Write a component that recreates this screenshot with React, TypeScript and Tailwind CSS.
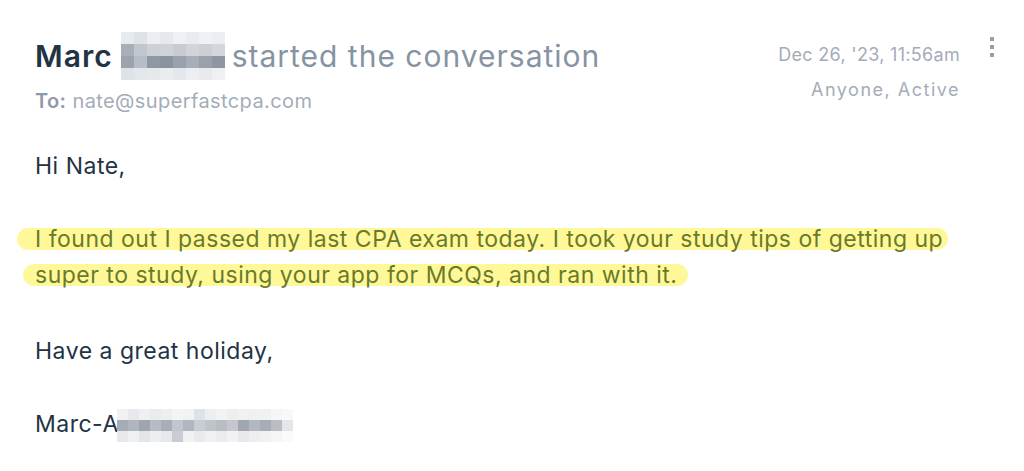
const nameBlur = [
  ['#e8eaee', '#dfe2e7', '#eceef1', '#e6e8ec', '#eef0f3', '#e9ebee', '#f0f1f4', '#eceef1'],
  ['#a9afb8', '#c2c7ce', '#cdd1d6', '#cfd3d8', '#c8ccd2', '#d1d5da', '#ccd0d5', '#d3d6db'],
  ['#9ca3ad', '#b7bdc5', '#8f97a2', '#8b939e', '#9aa1ab', '#a8aeb7', '#9aa1ab', '#8e96a1'],
  ['#dfe2e6', '#e3e6ea', '#e6e9ec', '#eaecef', '#e4e7eb', '#eceef1', '#e8eaed', '#eef0f2'],
];

const sigBlur = [
  ['#f0f1f3', '#e7e9ec', '#eff0f2', '#e9ebee', '#eceef0', '#f3f4f5', '#f1f2f4', '#dee1e5', '#eceef1', '#f1f2f4', '#eceef0', '#f0f1f3', '#eef0f2', '#f0f1f3', '#f5f6f7', '#f8f8f9'],
  ['#a6acb5', '#b0b6be', '#9ea5ae', '#b7bcc4', '#a8aeb7', '#c1c6cc', '#b1b7bf', '#c9cdd3', '#bfc4ca', '#b9bec5', '#c4c8ce', '#a0a7b0', '#b2b8bf', '#a7adb5', '#b9bec5', '#e4e6e9'],
  ['#e7e9ec', '#eef0f2', '#e3e6e9', '#eceef0', '#e6e8eb', '#c9cdd3', '#f0f1f3', '#e8eaed', '#eef0f2', '#e9ebee', '#f1f2f4', '#e7e9ec', '#eceef0', '#f0f1f3', '#f4f5f6', '#fafafa'],
];

function Pixels({ rows, cell }: { rows: string[][]; cell: string }) {
  return (
    <span className="inline-flex flex-col align-middle">
      {rows.map((r, i) => (
        <span key={i} className="flex">
          {r.map((c, j) => (
            <span key={j} className={cell} style={{ backgroundColor: c }} />
          ))}
        </span>
      ))}
    </span>
  );
}

export default function App() {
  return (
    <div className="w-[1024px] h-[471px] bg-white font-['Inter',sans-serif] overflow-hidden">
      <div className="flex justify-between pl-[35px] pr-[30px] pt-[32px]">
        <div>
          <div className="flex items-center text-[30px] leading-[38px] tracking-[1px]">
            <span className="font-semibold text-[#223344]">Marc</span>
            <span className="ml-[8px] mr-[7px]">
              <Pixels rows={nameBlur} cell="w-[13px] h-[12px]" />
            </span>
            <span className="text-[#8693a3]">started the conversation</span>
          </div>
          <div className="mt-[8px] text-[20px] leading-[26px] tracking-[0.4px] text-[#a3adb9]">
            <span className="font-semibold text-[#8f9aa8]">To:</span> nate@superfastcpa.com
          </div>
        </div>
        <div className="flex gap-[30px]">
          <div className="flex flex-col items-end pt-[11px] text-[18px] leading-[24px] tracking-[0.3px] text-[#a3adb9]">
            <span>Dec 26, '23, 11:56am</span>
            <span className="mt-[11px] tracking-[1.5px]">Anyone, Active</span>
          </div>
          <div className="flex flex-col gap-[4px] pt-[5px]">
            <span className="w-[4px] h-[4px] bg-[#95a0ad]" />
            <span className="w-[4px] h-[4px] bg-[#95a0ad]" />
            <span className="w-[4px] h-[4px] bg-[#95a0ad]" />
          </div>
        </div>
      </div>

      <div className="pl-[35px] pt-[34px] text-[23px] leading-[36px] tracking-[0.5px] text-[#223344]">
        <p>Hi Nate,</p>
        <div className="mt-[44px] flex flex-col items-start gap-[14px] text-[#6b7a2a]">
          <span className="h-[22px] leading-[22px] bg-[#fff899] rounded-full -ml-[18px] pl-[18px] pr-[5px] whitespace-nowrap">
            I found out I passed my last CPA exam today. I took your study tips of getting up
          </span>
          <span className="h-[22px] leading-[22px] bg-[#fff899] rounded-full -ml-[12px] pl-[12px] pr-[11px] whitespace-nowrap">
            super to study, using your app for MCQs, and ran with it.
          </span>
        </div>
        <p className="mt-[47px]">Have a great holiday,</p>
        <p className="mt-[37px] flex items-center">
          <span>Marc-A</span>
          <span className="-ml-[2px]">
            <Pixels rows={sigBlur} cell="w-[11px] h-[11px]" />
          </span>
        </p>
      </div>
    </div>
  );
}
